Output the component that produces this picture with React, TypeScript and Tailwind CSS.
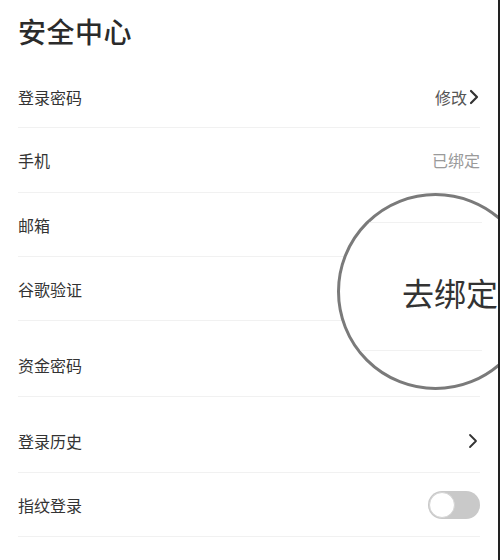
import React from 'react'

const font = { fontFamily: '"Noto Sans CJK SC", "Noto Sans", sans-serif' }

const Chevron = ({ bold }: { bold?: boolean }) => (
    <svg width="12" height="16" viewBox="0 0 12 16" fill="none" className="shrink-0">
        <polyline
            points="3,2 9,8 3,14"
            stroke="#333"
            strokeWidth={bold ? 2.2 : 1.8}
            strokeLinecap="round"
            strokeLinejoin="round"
        />
    </svg>
)

const Toggle = () => (
    <div className="relative w-[52px] h-[28px] rounded-full bg-[#c9c9c9]">
        <div className="absolute left-[1px] top-[1px] w-[26px] h-[26px] rounded-full bg-white border border-[#d4d4d4]" />
    </div>
)

export default function App() {
    return (
        <div className="w-[500px] h-[560px] bg-white border-r-2 border-[#222]" style={font}>
            <div className="relative w-full h-full overflow-hidden px-[18px]">
                {/* Header */}
                <div className="h-[61px] flex items-center">
                    <h1 className="text-[28px] leading-none font-medium text-[#2b2b2b] tracking-[0.5px]">安全中心</h1>
                </div>

                {/* Rows */}
                <div className="h-[67px] pt-[6px] flex items-center justify-between border-b border-[#f1f1f1]">
                    <span className="text-[16px] text-[#333]">登录密码</span>
                    <span className="flex items-center gap-[1px] text-[16px] text-[#555]">
                        修改
                        <Chevron bold />
                    </span>
                </div>
                <div className="h-[65px] flex items-center justify-between border-b border-[#f1f1f1]">
                    <span className="text-[16px] text-[#333]">手机</span>
                    <span className="text-[16px] text-[#9a9a9a]">已绑定</span>
                </div>
                <div className="h-[64px] flex items-center justify-between border-b border-[#f1f1f1]">
                    <span className="text-[16px] text-[#333]">邮箱</span>
                </div>
                <div className="h-[64px] flex items-center justify-between border-b border-[#f1f1f1]">
                    <span className="text-[16px] text-[#333]">谷歌验证</span>
                </div>
                <div className="h-[76px] pt-[12px] flex items-center justify-between border-b border-[#f1f1f1]">
                    <span className="text-[16px] text-[#333]">资金密码</span>
                </div>
                <div className="h-[76px] pt-[12px] flex items-center justify-between border-b border-[#f1f1f1]">
                    <span className="text-[16px] text-[#333]">登录历史</span>
                    <span className="pr-[1px]">
                        <Chevron />
                    </span>
                </div>
                <div className="h-[64px] flex items-center justify-between border-b border-[#f1f1f1]">
                    <span className="text-[16px] text-[#333]">指纹登录</span>
                    <Toggle />
                </div>

                {/* Magnifier overlay */}
                <div className="absolute left-[337px] top-[193px] w-[197px] h-[197px] rounded-full border-[3px] border-[#7a7a7a] bg-white overflow-hidden">
                    <div className="absolute left-0 w-[142px] top-[26px] h-px bg-[#f1f1f1]" />
                    <div className="absolute left-0 w-[142px] top-[154px] h-px bg-[#f1f1f1]" />
                    <div className="absolute left-[62px] top-[76px] text-[32px] leading-[40px] text-[#333] whitespace-nowrap">去绑定</div>
                </div>
            </div>
        </div>
    )
}
